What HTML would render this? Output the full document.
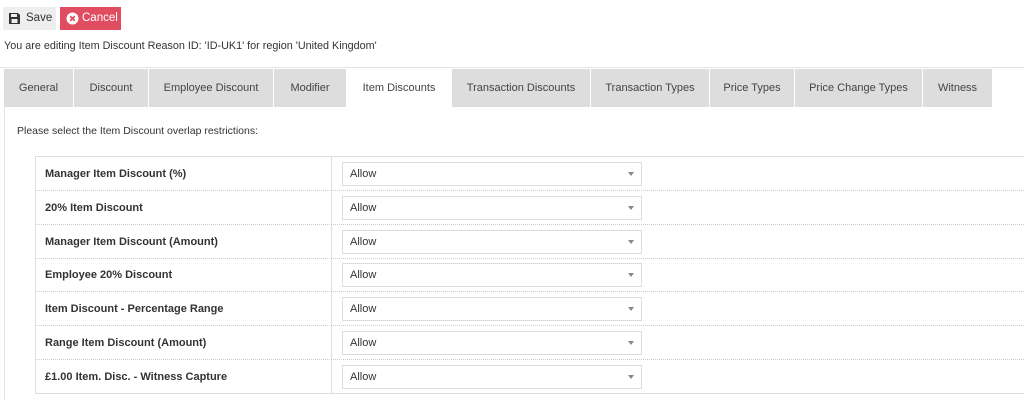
<!DOCTYPE html>
<html><head><meta charset="utf-8"><style>
*{box-sizing:border-box}
body{margin:0;width:1024px;height:400px;overflow:hidden;background:#fff;font-family:"Liberation Sans",sans-serif;color:#333;font-size:11.5px;position:relative}
.abs{position:absolute}
.btn{position:absolute;top:7px;height:23px;line-height:23px;font-size:11.5px}
.tabs{position:absolute;top:67px;left:0;width:1024px;height:39px;border-top:1px solid #e4e4e4}
.tab{position:absolute;top:1px;height:38px;background:#ddd;text-align:center;line-height:38px;font-size:11px;color:#444}
.tab.act{background:#fff}
.row{position:absolute;left:35px;width:989px;height:34px;border-bottom:1px dotted #ccc}
.lab{position:absolute;left:10px;top:0;line-height:34px;font-weight:bold;font-size:11px;color:#333}
.sel{position:absolute;left:307px;top:5px;width:300px;height:24px;border:1px solid #ddd;line-height:22px;padding-left:7px;font-size:11px}
.sel:after{content:"";position:absolute;right:7px;top:9px;border-left:3px solid transparent;border-right:3px solid transparent;border-top:4px solid #888}
</style></head><body>
<div class="btn" style="left:3px;width:53px;background:#eee;color:#333">
<svg class="abs" style="left:6px;top:6px" width="11" height="11" viewBox="0 0 11 11"><path d="M0 0H9L11 2V11H0Z" fill="#333"/><rect x="2" y="1" width="6" height="3" fill="#eee"/><rect x="2.5" y="6" width="6" height="4" fill="#eee"/></svg>
<span style="position:absolute;left:23px">Save</span></div>
<div class="btn" style="left:60px;width:61px;background:#e04d60;color:#fff">
<svg class="abs" style="left:6px;top:5px" width="13" height="13" viewBox="0 0 13 13"><circle cx="6.5" cy="6.5" r="6" fill="#fff"/><path d="M4.2 4.2L8.8 8.8M8.8 4.2L4.2 8.8" stroke="#e04d60" stroke-width="1.8"/></svg>
<span style="position:absolute;left:22px">Cancel</span></div>
<div class="abs" style="left:4px;top:40px;font-size:10.8px">You are editing Item Discount Reason ID: 'ID-UK1' for region 'United Kingdom'</div>
<div class="tabs">
<div class="tab" style="left:4px;width:69px">General</div>
<div class="tab" style="left:74px;width:74px">Discount</div>
<div class="tab" style="left:149px;width:124px">Employee Discount</div>
<div class="tab" style="left:274px;width:72px">Modifier</div>
<div class="tab act" style="left:347px;width:104px">Item Discounts</div>
<div class="tab" style="left:452px;width:138px">Transaction Discounts</div>
<div class="tab" style="left:591px;width:118px">Transaction Types</div>
<div class="tab" style="left:710px;width:84px">Price Types</div>
<div class="tab" style="left:795px;width:127px">Price Change Types</div>
<div class="tab" style="left:923px;width:69px">Witness</div>
</div>
<div class="abs" style="left:4px;top:106px;width:1px;height:294px;background:#e4e4e4"></div>
<div class="abs" style="left:17px;top:125px;font-size:10.5px">Please select the Item Discount overlap restrictions:</div>
<div class="abs" style="left:35px;top:156px;width:989px;height:238px;border:1px solid #ddd;border-right:none"></div>
<div class="abs" style="left:331px;top:157px;width:1px;height:236px;background:#ddd"></div>
<div class="row" style="top:157px"><div class="lab">Manager Item Discount (%)</div><div class="sel">Allow</div></div>
<div class="row" style="top:191px"><div class="lab">20% Item Discount</div><div class="sel">Allow</div></div>
<div class="row" style="top:225px"><div class="lab">Manager Item Discount (Amount)</div><div class="sel">Allow</div></div>
<div class="row" style="top:258px"><div class="lab">Employee 20% Discount</div><div class="sel">Allow</div></div>
<div class="row" style="top:292px"><div class="lab">Item Discount - Percentage Range</div><div class="sel">Allow</div></div>
<div class="row" style="top:326px"><div class="lab">Range Item Discount (Amount)</div><div class="sel">Allow</div></div>
<div class="row" style="top:360px;border-bottom:none"><div class="lab">£1.00 Item. Disc. - Witness Capture</div><div class="sel">Allow</div></div>
</body></html>
